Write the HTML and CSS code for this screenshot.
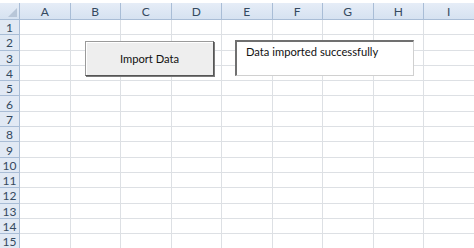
FILE: index.html
```html
<!DOCTYPE html>
<html lang="en">
<head>
    <meta charset="UTF-8">
    <title>Sheet1</title>
    <link rel="stylesheet" href="styles.css">
</head>
<body>
    <section class="sheet">
        <!-- Column headers -->
        <div class="grid">
            <div class="corner"><span class="tri"></span></div>
            <div class="ch">A</div><div class="ch">B</div><div class="ch">C</div>
            <div class="ch">D</div><div class="ch">E</div><div class="ch">F</div>
            <div class="ch">G</div><div class="ch">H</div><div class="ch">I</div>

            <div class="rh">1</div><div class="c"></div><div class="c"></div><div class="c"></div><div class="c"></div><div class="c"></div><div class="c"></div><div class="c"></div><div class="c"></div><div class="c"></div>
            <div class="rh">2</div><div class="c"></div><div class="c"></div><div class="c"></div><div class="c"></div><div class="c"></div><div class="c"></div><div class="c"></div><div class="c"></div><div class="c"></div>
            <div class="rh">3</div><div class="c"></div><div class="c"></div><div class="c"></div><div class="c"></div><div class="c"></div><div class="c"></div><div class="c"></div><div class="c"></div><div class="c"></div>
            <div class="rh">4</div><div class="c"></div><div class="c"></div><div class="c"></div><div class="c"></div><div class="c"></div><div class="c"></div><div class="c"></div><div class="c"></div><div class="c"></div>
            <div class="rh">5</div><div class="c"></div><div class="c"></div><div class="c"></div><div class="c"></div><div class="c"></div><div class="c"></div><div class="c"></div><div class="c"></div><div class="c"></div>
            <div class="rh">6</div><div class="c"></div><div class="c"></div><div class="c"></div><div class="c"></div><div class="c"></div><div class="c"></div><div class="c"></div><div class="c"></div><div class="c"></div>
            <div class="rh">7</div><div class="c"></div><div class="c"></div><div class="c"></div><div class="c"></div><div class="c"></div><div class="c"></div><div class="c"></div><div class="c"></div><div class="c"></div>
            <div class="rh">8</div><div class="c"></div><div class="c"></div><div class="c"></div><div class="c"></div><div class="c"></div><div class="c"></div><div class="c"></div><div class="c"></div><div class="c"></div>
            <div class="rh">9</div><div class="c"></div><div class="c"></div><div class="c"></div><div class="c"></div><div class="c"></div><div class="c"></div><div class="c"></div><div class="c"></div><div class="c"></div>
            <div class="rh">10</div><div class="c"></div><div class="c"></div><div class="c"></div><div class="c"></div><div class="c"></div><div class="c"></div><div class="c"></div><div class="c"></div><div class="c"></div>
            <div class="rh">11</div><div class="c"></div><div class="c"></div><div class="c"></div><div class="c"></div><div class="c"></div><div class="c"></div><div class="c"></div><div class="c"></div><div class="c"></div>
            <div class="rh">12</div><div class="c"></div><div class="c"></div><div class="c"></div><div class="c"></div><div class="c"></div><div class="c"></div><div class="c"></div><div class="c"></div><div class="c"></div>
            <div class="rh">13</div><div class="c"></div><div class="c"></div><div class="c"></div><div class="c"></div><div class="c"></div><div class="c"></div><div class="c"></div><div class="c"></div><div class="c"></div>
            <div class="rh">14</div><div class="c"></div><div class="c"></div><div class="c"></div><div class="c"></div><div class="c"></div><div class="c"></div><div class="c"></div><div class="c"></div><div class="c"></div>
            <div class="rh">15</div><div class="c"></div><div class="c"></div><div class="c"></div><div class="c"></div><div class="c"></div><div class="c"></div><div class="c"></div><div class="c"></div><div class="c"></div>
        </div>

        <!-- Form controls floating over the cells -->
        <button class="import-btn">Import Data</button>
        <div class="textbox">Data imported successfully</div>
    </section>
</body>
</html>
```

FILE: styles.css
```css
* {
    margin: 0;
    padding: 0;
    box-sizing: border-box;
}

body {
    background-color: #fff;
    font-family: Lato, "Liberation Sans", Arial, sans-serif;
    overflow: hidden;
}

.sheet {
    position: relative;
    padding-top: 3px;
}

.grid {
    display: grid;
    grid-template-columns: 20px repeat(9, 50.5px);
    grid-template-rows: 17px;
    grid-auto-rows: 15.3px;
}

.corner,
.ch,
.rh {
    background: linear-gradient(#e6edf7, #d6e2f1);
    color: #34495f;
    font-size: 12px;
    border-right: 1px solid #a9bdd6;
    border-bottom: 1px solid #a9bdd6;
    display: flex;
    align-items: center;
    justify-content: center;
}

.corner {
    position: relative;
}

.tri {
    position: absolute;
    right: 2px;
    bottom: 2px;
    width: 0;
    height: 0;
    border-left: 9px solid transparent;
    border-bottom: 9px solid #b8c6d8;
}

.rh {
    background: #e1e9f4;
    padding-top: 1px;
}

.c {
    border-right: 1px solid #dde0e4;
    border-bottom: 1px solid #dde0e4;
}

.import-btn {
    position: absolute;
    left: 85px;
    top: 41px;
    width: 129px;
    height: 35px;
    background-color: #eeeeee;
    border: 1px solid #9a9a9a;
    border-right-color: #555;
    border-bottom-color: #555;
    box-shadow: inset 1px 1px 0 #fff, 1px 1px 0 #7a7a7a;
    font-family: Lato, "Liberation Sans", Arial, sans-serif;
    font-size: 11.2px;
    color: #111;
}

.textbox {
    position: absolute;
    left: 235px;
    top: 40px;
    width: 179px;
    height: 36px;
    background-color: #fff;
    border-top: 2px solid #707070;
    border-left: 2px solid #707070;
    border-right: 1px solid #d0d0d0;
    border-bottom: 1px solid #d0d0d0;
    padding: 3px 0 0 9px;
    font-size: 11.2px;
    color: #111;
}
```
